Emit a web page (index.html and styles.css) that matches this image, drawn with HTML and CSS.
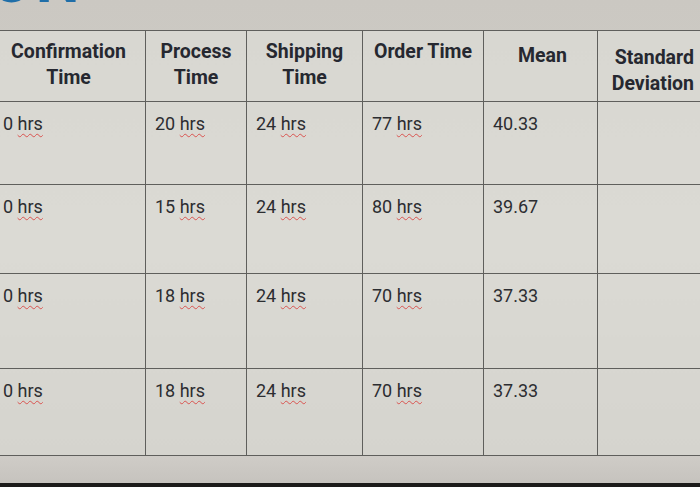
FILE: index.html
```html
<!DOCTYPE html>
<html lang="en">
<head>
<meta charset="utf-8">
<title>Order Times</title>
<link rel="stylesheet" href="styles.css">
</head>
<body>
<div class="screen">
  <div class="title-strip"><span class="title">ON</span></div>
  <table class="times">
    <colgroup>
      <col class="c1"><col class="c2"><col class="c3"><col class="c4"><col class="c5"><col class="c6">
    </colgroup>
    <thead>
      <tr class="r-head">
        <th>Confirmation<br>Time</th>
        <th>Process<br>Time</th>
        <th>Shipping<br>Time</th>
        <th>Order Time</th>
        <th class="mean">Mean</th>
        <th class="sd">Standard<br>Deviation</th>
      </tr>
    </thead>
    <tbody>
      <tr class="r1">
        <td>0 <span class="sp">hrs</span></td>
        <td>20 <span class="sp">hrs</span></td>
        <td>24 <span class="sp">hrs</span></td>
        <td>77 <span class="sp">hrs</span></td>
        <td>40.33</td>
        <td></td>
      </tr>
      <tr class="r2">
        <td>0 <span class="sp">hrs</span></td>
        <td>15 <span class="sp">hrs</span></td>
        <td>24 <span class="sp">hrs</span></td>
        <td>80 <span class="sp">hrs</span></td>
        <td>39.67</td>
        <td></td>
      </tr>
      <tr class="r3">
        <td>0 <span class="sp">hrs</span></td>
        <td>18 <span class="sp">hrs</span></td>
        <td>24 <span class="sp">hrs</span></td>
        <td>70 <span class="sp">hrs</span></td>
        <td>37.33</td>
        <td></td>
      </tr>
      <tr class="r4">
        <td>0 <span class="sp">hrs</span></td>
        <td>18 <span class="sp">hrs</span></td>
        <td>24 <span class="sp">hrs</span></td>
        <td>70 <span class="sp">hrs</span></td>
        <td>37.33</td>
        <td></td>
      </tr>
    </tbody>
  </table>
  <div class="bottom-space"></div>
  <div class="bezel"></div>
</div>
</body>
</html>
```

FILE: styles.css
```css
html, body {
  margin: 0;
  padding: 0;
  background: #c9c6c0;
}
.screen {
  width: 700px;
  height: 487px;
  overflow: hidden;
  display: flex;
  flex-direction: column;
  background: linear-gradient(180deg, #cbc8c2 0%, #d0cec8 50%, #c8c5c0 100%);
  font-family: Roboto, "Liberation Sans", sans-serif;
  color: #2a2b31;
}
.title-strip {
  height: 30px;
  flex: none;
  overflow: hidden;
}
.title {
  display: block;
  margin: -51px 0 0 -10px;
  font-size: 62px;
  line-height: 64px;
  font-weight: 700;
  color: #1f6ea8;
  letter-spacing: 3px;
}
.times {
  flex: none;
  border-collapse: collapse;
  table-layout: fixed;
  width: 718px;
  margin-left: -9px;
  background: linear-gradient(180deg, #d8d7d1 0%, #dbdad4 50%, #d5d4ce 100%);
}
.c1 { width: 154px; }
.c2 { width: 101px; }
.c3 { width: 116px; }
.c4 { width: 121px; }
.c5 { width: 114px; }
.c6 { width: 112px; }
.times th, .times td {
  border: 1.5px solid #5f5f5c;
  vertical-align: top;
  padding: 0;
}
.times th {
  font-size: 19.5px;
  font-weight: 700;
  line-height: 26px;
  text-align: center;
  padding-top: 8px;
  color: #262830;
}
.times th.mean {
  padding-top: 12px;
  padding-left: 4px;
}
.times th.sd {
  padding-top: 14px;
  text-align: right;
  padding-right: 15px;
}
.times td {
  font-size: 18px;
  line-height: 22px;
  padding: 11px 0 0 9px;
  color: #2c2d31;
}
.times tr td:first-child {
  padding-left: 11px;
}
.r-head { height: 71px; }
.r1 { height: 83px; }
.r2 { height: 89px; }
.r3 { height: 95px; }
.r4 { height: 87px; }
.sp {
  text-decoration: underline wavy #d9534f;
  text-decoration-thickness: 1px;
  text-underline-offset: 3px;
}
.bottom-space {
  flex: 1;
  background: linear-gradient(180deg, #cfccc7, #c6c3be);
}
.bezel {
  height: 4px;
  flex: none;
  background: #1c1b1a;
}
```
